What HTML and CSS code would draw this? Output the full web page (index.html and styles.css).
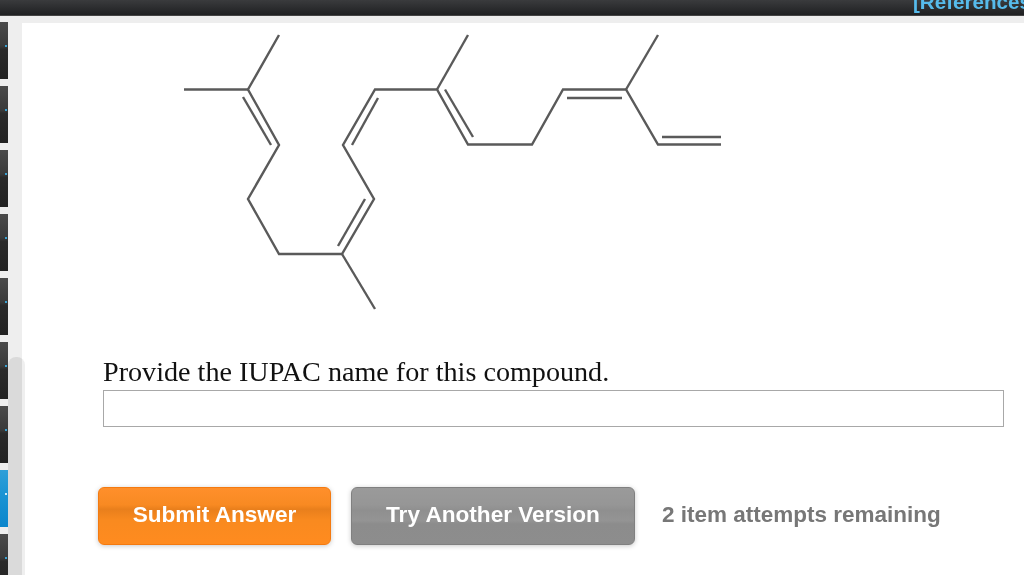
FILE: index.html
```html
<!DOCTYPE html>
<html lang="en">
<head>
<meta charset="utf-8">
<title>Question</title>
<link rel="stylesheet" href="styles.css">
</head>
<body>
<div class="app">
  <header class="topbar"><a class="refs">[References]</a></header>
  <div class="band"></div>
  <div class="main">
    <nav class="rail">
      <div class="tile"><i></i></div>
      <div class="tile"><i></i></div>
      <div class="tile"><i></i></div>
      <div class="tile"><i></i></div>
      <div class="tile"><i></i></div>
      <div class="tile"><i></i></div>
      <div class="tile"><i></i></div>
      <div class="tile active"><i></i></div>
      <div class="tile"><i></i></div>
    </nav>
    <div class="scrollthumb"></div>
    <main class="content">
      <svg class="molecule" viewBox="180 30 545 285" width="545" height="285" aria-label="Structure of the compound">
        <g class="bond">
          <path d="M279 35 248 89.500 279 145 248 199 279 254 342 254 374 199 343 145 375 89.500 437 89.500 468 144.500 532 144.500 563 89.500 626 89.500 658 144.500 721 144.500"/>
          <path d="M184 89.500H248"/>
          <path d="M437 89.500 468 35"/>
          <path d="M626 89.500 658 35"/>
          <path d="M342 254 375 309"/>
          <path d="M243 97 271 145"/>
          <path d="M338 246 365 199"/>
          <path d="M352 145 378 98"/>
          <path d="M445 89.500 473 137"/>
          <path d="M567 98H622"/>
          <path d="M662 137H721"/>
        </g>
      </svg>
      <p class="prompt">Provide the IUPAC name for this compound.</p>
      <input class="answer" type="text" aria-label="Answer">
      <div class="actions">
        <button class="btn submit" type="button"><span class="label">Submit Answer</span></button>
        <button class="btn retry" type="button"><span class="label">Try Another Version</span></button>
        <span class="attempts">2 item attempts remaining</span>
      </div>
    </main>
  </div>
</div>
</body>
</html>
```
FILE: styles.css
```css
* { box-sizing: border-box; }
html, body { margin: 0; padding: 0; background: #fff; }
.app {
  position: relative;
  width: 1024px;
  height: 575px;
  overflow: hidden;
  display: flex;
  flex-direction: column;
  font-family: "Liberation Sans", Arial, sans-serif;
}
.topbar {
  flex: none;
  height: 16px;
  background: linear-gradient(#3a3b3d, #1f2022);
  overflow: hidden;
  display: flex;
  align-items: flex-end;
  padding-left: 913px;
  border-bottom: 1px solid #444;
}
.refs {
  flex: none;
  white-space: nowrap;
  font-weight: 700;
  font-size: 20.6px;
  line-height: 26px;
  margin-bottom: 0;
  color: #56bbec;
  filter: blur(.5px);
}
.band { flex: none; height: 7px; background: #eeeeee; }
.main { flex: 1; display: flex; min-height: 0; }
.rail {
  flex: none;
  width: 22px;
  background: #eeeeee;
  display: flex;
  flex-direction: column;
  gap: 7px;
  overflow: hidden;
  margin-top: -1px;
}
.tile {
  flex: none;
  position: relative;
  width: 8px;
  height: 57px;
  background: linear-gradient(#4a4a4a 0, #3a3a3a 42%, #2a2a2a 48%, #222 100%);
}
.tile i {
  position: absolute;
  right: 1px;
  top: 23px;
  width: 2px;
  height: 2px;
  background: #3aa0d0;
}
.tile.active { background: linear-gradient(#2f9fd8 0, #1a93d3 45%, #0b86cc 100%); }
.tile.active i { background: #cfeaf8; }
.scrollthumb {
  position: absolute;
  left: 8px;
  top: 357px;
  bottom: 0;
  width: 17px;
  background: linear-gradient(90deg, #dadada 0, #dadada 82%, #efefef 82%, #efefef 100%);
  border-radius: 8px 8px 0 0;
}
.content { flex: 1; min-width: 0; background: #fff; }
.molecule { display: block; margin: 7px 0 0 158px; filter: blur(.6px); }
.bond path { fill: none; stroke: #5a5a5a; stroke-width: 2.4; stroke-linejoin: miter; }
.prompt {
  margin: 41px 0 0 81px;
  font-family: "Liberation Serif", "Times New Roman", serif;
  font-size: 28.15px;
  line-height: 32px;
  color: #111;
  filter: blur(.3px);
}
.answer {
  display: block;
  margin: 2px 0 0 81px;
  width: 901px;
  height: 37px;
  border: 1px solid #a8a8a8;
  background: #fff;
  padding: 0;
}
.actions {
  display: flex;
  align-items: center;
  margin: 60px 0 0 76px;
}
.btn {
  height: 58px;
  padding: 0 0 2px;
  border-radius: 6px;
  font-family: "Liberation Sans", Arial, sans-serif;
  font-weight: 700;
  font-size: 22.6px;
  color: #fff;
  box-shadow: 0 1px 5px rgba(0,0,0,.22);
}
.label { display: inline-block; filter: blur(.3px); }
.submit {
  width: 233px;
  border: 1px solid #f47a10;
  background: linear-gradient(#ff8f2b 0, #f88a22 30%, #e97f1c 38%, #f98a1f 58%, #ff8b1f 100%);
}
.retry {
  width: 284px;
  margin-left: 20px;
  border: 1px solid #808080;
  background: linear-gradient(#9a9a9a 0, #969696 30%, #8f8f8f 40%, #949494 58%, #8c8c8c 64%, #8d8d8d 100%);
}
.attempts {
  margin-left: 27px;
  padding-bottom: 2px;
  font-weight: 700;
  font-size: 22.5px;
  color: #777;
  filter: blur(.3px);
}
```
